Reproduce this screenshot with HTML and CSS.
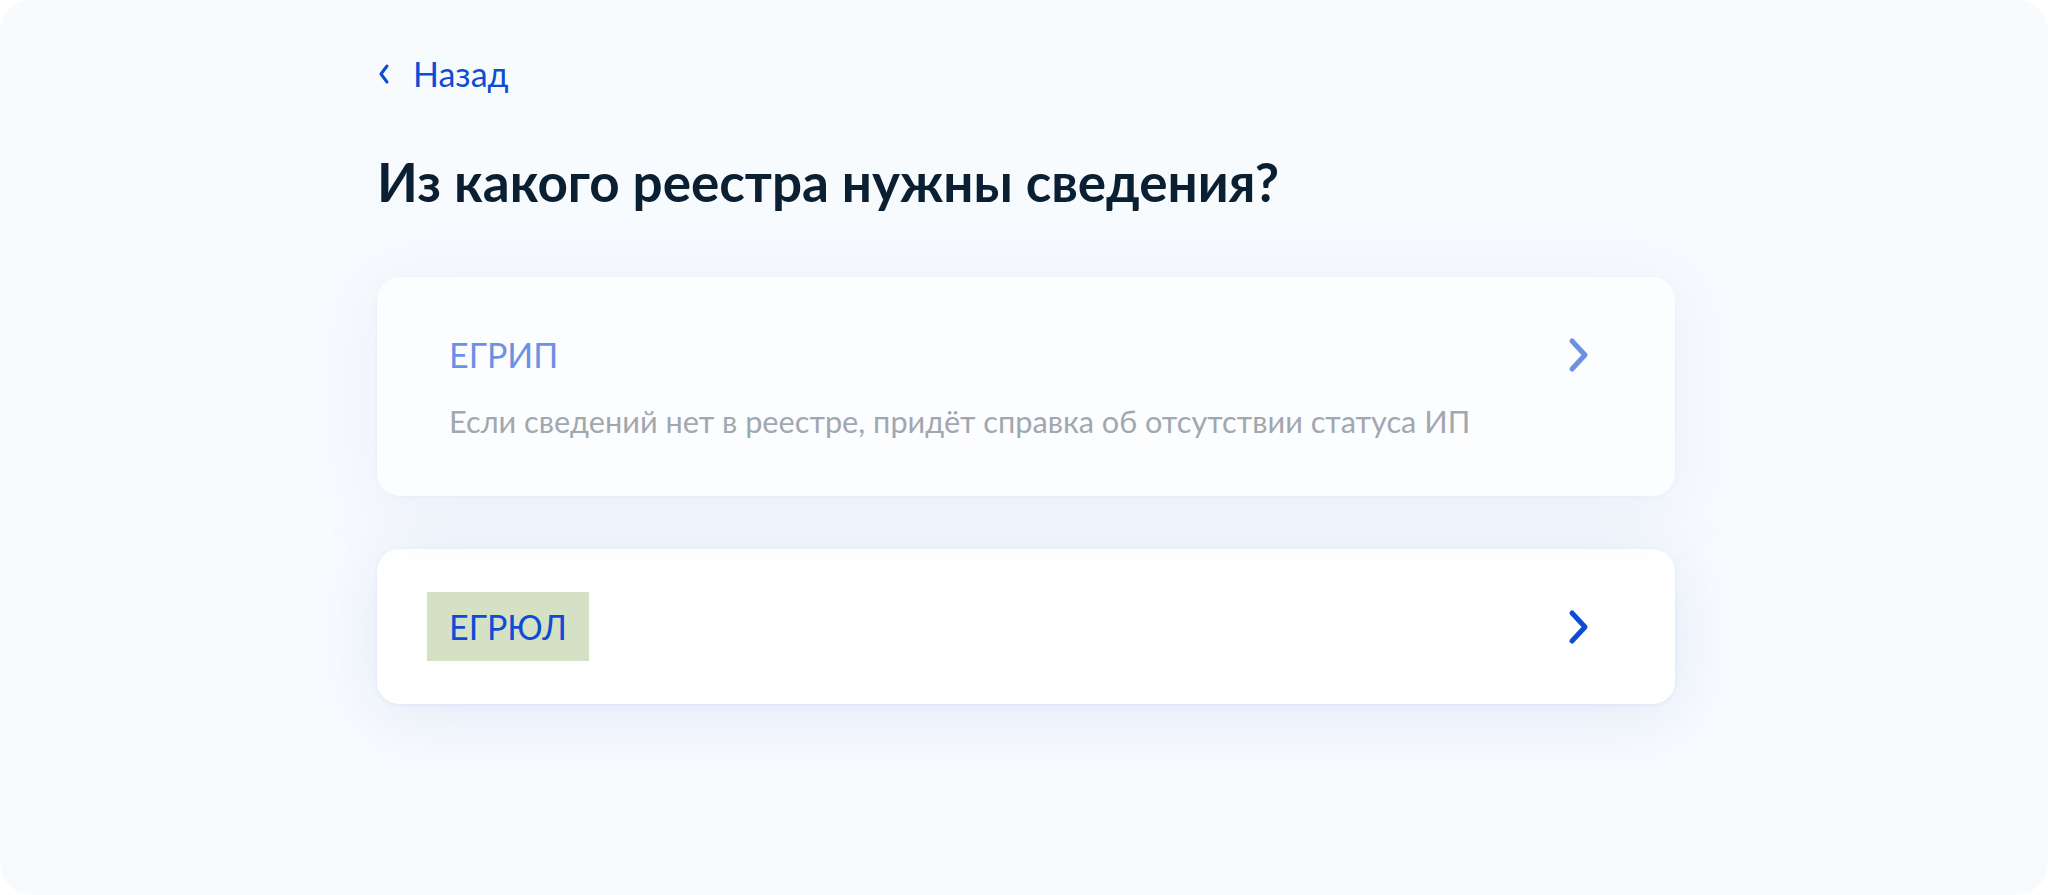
FILE: index.html
```html
<!DOCTYPE html>
<html>
<head>
    <meta charset="UTF-8">
    <title>Из какого реестра нужны сведения?</title>
    <link rel="stylesheet" href="styles.css">
</head>
<body>
    <div class="frame">
      <div class="content">
        <a class="back" href="#back">
          <svg class="back-icon" width="14" height="22" viewBox="0 0 14 22"><path d="M10 3 L4 11 L10 19" fill="none" stroke="currentColor" stroke-width="3" stroke-linecap="round" stroke-linejoin="round"/></svg>
          <span>Назад</span>
        </a>
        <h1 class="title">Из какого реестра нужны сведения?</h1>

        <!-- list of registries -->
        <div class="options">
          <a class="option dim" href="#egrip">
            <div class="option-head">
              <div class="option-name">ЕГРИП</div>
              <svg class="arrow" width="24" height="36" viewBox="0 0 24 36"><path d="M5 4 L18 18 L5 32" fill="none" stroke="currentColor" stroke-width="5" stroke-linecap="round" stroke-linejoin="round"/></svg>
            </div>
            <div class="option-desc">Если сведений нет в реестре, придёт справка об отсутствии статуса ИП</div>
          </a>
          <a class="option" href="#egrul">
            <div class="option-head">
              <div class="option-name marked">ЕГРЮЛ</div>
              <svg class="arrow" width="24" height="36" viewBox="0 0 24 36"><path d="M5 4 L18 18 L5 32" fill="none" stroke="currentColor" stroke-width="5" stroke-linecap="round" stroke-linejoin="round"/></svg>
            </div>
          </a>
        </div>
      </div>
    </div>
</body>
</html>
```

FILE: styles.css
```css
html, body {
  margin: 0;
  height: 100%;
  background-color: #ffffff;
}
body {
  font-family: Lato, "Open Sans", sans-serif;
}

/* rounded light page behind everything */
.frame {
  height: 895px;
  padding-left: 4px;
  background-color: #f8fbfe;
  border-radius: 32px;
  overflow: hidden;
}
.content {
  width: 1298px;
  margin: 0 auto;
  padding-top: 53px;
}

/* back link */
.back {
  display: inline-flex;
  align-items: center;
  gap: 22px;
  color: #0d4cd3;
  text-decoration: none;
  font-size: 34px;
  line-height: 41px;
}
.back-icon {
  display: block;
}

.title {
  margin: 57px 0 0 0;
  color: #0b1f33;
  font-size: 53px;
  font-weight: 700;
  line-height: 62px;
}

/* cards */
.options {
  display: flex;
  flex-direction: column;
  gap: 53px;
  margin-top: 64px;
}
.option {
  display: block;
  background-color: #ffffff;
  border-radius: 22px;
  padding: 43px 84px 43px 50px;
  text-decoration: none;
  box-shadow: 0 10px 70px rgba(110, 145, 215, 0.17), 0 1px 4px rgba(110, 145, 215, 0.12);
}
.option.dim {
  opacity: 0.6;
  padding-bottom: 56px;
}
.option-head {
  display: flex;
  align-items: center;
  justify-content: space-between;
}
.option-name {
  color: #0d4cd3;
  font-size: 34px;
  line-height: 41px;
  padding: 14px 22px;
}
.option-name.marked {
  background-color: #d5e1c5;
}
.option-desc {
  color: #68717b;
  font-size: 30.7px;
  line-height: 36px;
  padding: 0 22px;
  margin-top: 15px;
}
.arrow {
  display: block;
  color: #0d4cd3;
}
```
